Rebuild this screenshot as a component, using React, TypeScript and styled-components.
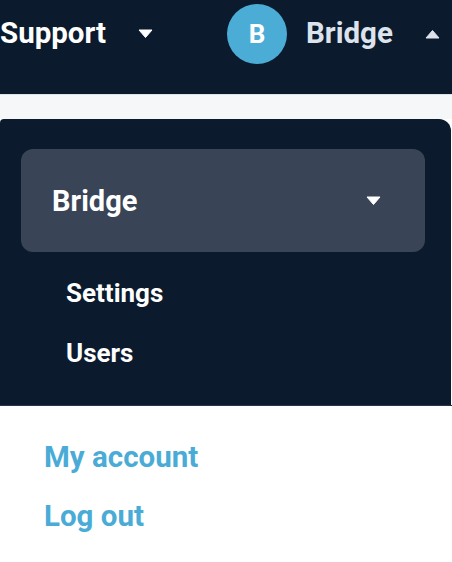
import styled, { createGlobalStyle } from 'styled-components';

const GlobalStyle = createGlobalStyle`
    html, body {
        margin: 0;
        padding: 0;
        background: #ffffff;
        font-family: Roboto, "Liberation Sans", sans-serif;
    }
`;

const Page = styled.div`
    width: 452px;
    height: 562px;
    overflow: hidden;
    display: flex;
    flex-direction: column;
`;

const TopBar = styled.header`
    height: 94px;
    flex-shrink: 0;
    background-color: #0b1b2d;
    display: flex;
    align-items: flex-start;
    padding-top: 4px;
    box-sizing: border-box;
`;

const NavGroup = styled.div<{ $gap: number; $ml?: number }>`
    display: flex;
    align-items: center;
    height: 60px;
    column-gap: ${(p) => p.$gap}px;
    margin-left: ${(p) => p.$ml ?? 0}px;
`;

const NavLabel = styled.span<{ $muted?: boolean }>`
    color: ${(p) => (p.$muted ? '#dde3ec' : '#ffffff')};
    font-size: 29.5px;
    font-weight: 700;
    line-height: 1;
`;

const Avatar = styled.div`
    width: 60px;
    height: 60px;
    border-radius: 50%;
    background-color: #4badd6;
    color: #ffffff;
    font-size: 26px;
    font-weight: 700;
    display: flex;
    align-items: center;
    justify-content: center;
`;

const Strip = styled.div`
    height: 25px;
    flex-shrink: 0;
    background-color: #f6f7f9;
    border-top: 1px solid #dfe2e7;
    box-sizing: border-box;
`;

const Panel = styled.div`
    background-color: #0b1b2d;
    border-radius: 4px 12px 0 0;
    margin-right: 1px;
    padding: 30px 26px 37px 21px;
    display: flex;
    flex-direction: column;
    row-gap: 26px;
`;

const OrgCard = styled.div`
    height: 103px;
    background-color: #394457;
    border-radius: 12px;
    display: flex;
    align-items: center;
    justify-content: space-between;
    padding: 0 44px 0 31px;
    box-sizing: border-box;
`;

const OrgName = styled.span`
    color: #ffffff;
    font-size: 29px;
    font-weight: 700;
`;

const SubMenu = styled.nav`
    display: flex;
    flex-direction: column;
    row-gap: 30px;
    padding-left: 45px;
`;

const SubItem = styled.a`
    color: #ffffff;
    font-size: 26px;
    font-weight: 700;
    line-height: 30px;
`;

const AccountMenu = styled.nav`
    display: flex;
    flex-direction: column;
    row-gap: 25px;
    padding: 34px 0 0 44px;
    border-top: 1px solid #2a3646;
`;

const AccountLink = styled.a`
    color: #4aacd6;
    font-size: 29.5px;
    font-weight: 700;
    line-height: 34px;
`;

const Caret = ({ up = false, color = '#ffffff' }: { up?: boolean; color?: string }) => (
    <svg width="15" height="10" viewBox="0 0 15 10">
        <path
            d={up ? 'M1 9 L7.5 1.5 L14 9 Z' : 'M1 1 L14 1 L7.5 8.5 Z'}
            fill={color}
            stroke={color}
            strokeWidth="1"
            strokeLinejoin="round"
        />
    </svg>
);

const App = () => {
    return (
        <>
            <GlobalStyle />
            <Page>
                <TopBar>
                    <NavGroup $gap={32}>
                        <NavLabel>Support</NavLabel>
                        <Caret />
                    </NavGroup>
                    <NavGroup $gap={19} $ml={74}>
                        <Avatar>B</Avatar>
                        <NavLabel $muted>Bridge</NavLabel>
                    </NavGroup>
                    <NavGroup $gap={0} $ml={32}>
                        <Caret up color="#dde3ec" />
                    </NavGroup>
                </TopBar>
                <Strip />
                <Panel>
                    <OrgCard>
                        <OrgName>Bridge</OrgName>
                        <Caret />
                    </OrgCard>
                    <SubMenu>
                        <SubItem>Settings</SubItem>
                        <SubItem>Users</SubItem>
                    </SubMenu>
                </Panel>
                <AccountMenu>
                    <AccountLink>My account</AccountLink>
                    <AccountLink>Log out</AccountLink>
                </AccountMenu>
            </Page>
        </>
    );
};

export default App;
